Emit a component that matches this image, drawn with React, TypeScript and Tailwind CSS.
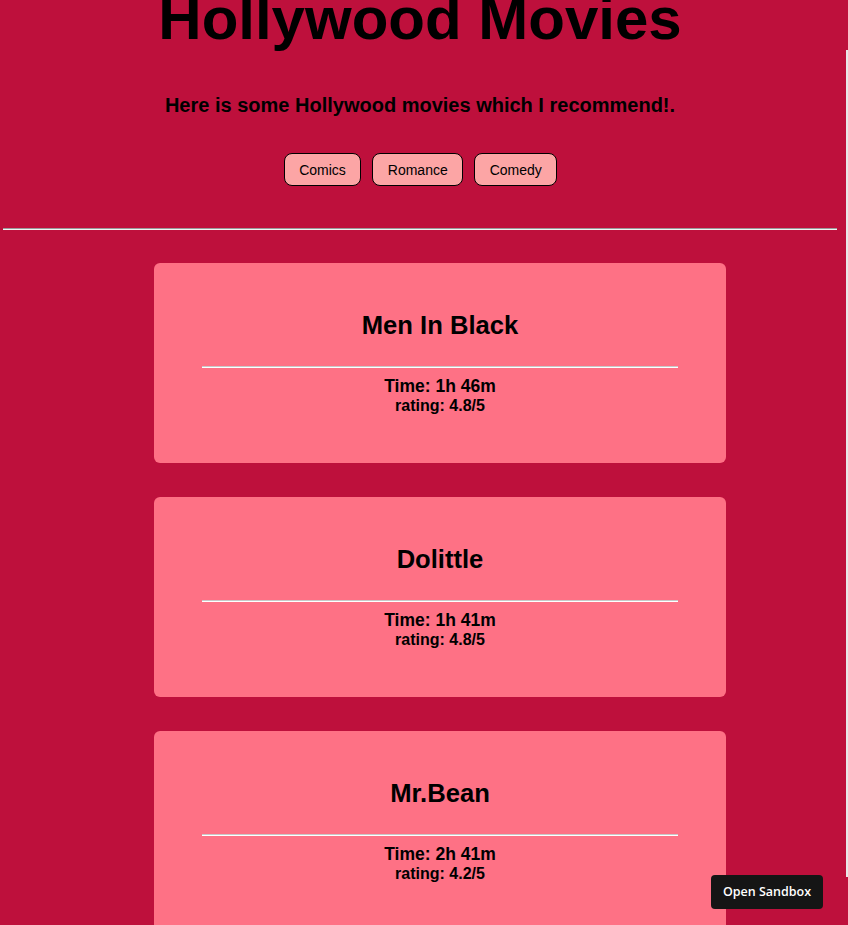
import React from "react";

const movies = [
  { name: "Men In Black", time: "1h 46m", rating: "4.8/5" },
  { name: "Dolittle", time: "1h 41m", rating: "4.8/5" },
  { name: "Mr.Bean", time: "2h 41m", rating: "4.2/5" },
];

export default function App() {
  return (
    <div
      className="relative h-[925px] w-[848px] overflow-hidden bg-[#be103c] text-black"
      style={{ fontFamily: '"Liberation Sans", Arial, sans-serif' }}
    >
      <div className="-mt-[11px] flex flex-col items-center pr-[8px]">
        <h1 className="text-[60px] leading-[60px] font-bold">Hollywood Movies</h1>
        <p className="mt-[45px] text-[20px] leading-[23px] font-bold">
          Here is some Hollywood movies which I recommend!.
        </p>
        <div className="mt-[36px] flex gap-[11px] pl-[1px]">
          {["Comics", "Romance", "Comedy"].map((g) => (
            <button
              key={g}
              className="h-[33px] rounded-[8px] border border-black bg-[#fca5a5] px-[14.5px] text-[14px] leading-[16px] text-black"
            >
              {g}
            </button>
          ))}
        </div>
      </div>
      <div className="mt-[42px] ml-[3px] w-[834px] border-t border-b border-t-[#9a9a9a] border-b-[#f2f2f2]" />
      <div className="mt-[33px] flex flex-col items-center gap-[34px] pl-[32px]">
        {movies.map((m) => (
          <div
            key={m.name}
            className="flex h-[200px] w-[572px] shrink-0 flex-col items-center rounded-[6px] bg-[#fe7185] pt-[48px]"
          >
            <h2 className="text-[25.6px] leading-[29px] font-bold">{m.name}</h2>
            <div className="mt-[26px] w-[476px] border-t border-b border-t-[#c8c8c8] border-b-[#ffffff]" />
            <div className="mt-[8px] text-[17.5px] leading-[20px] font-bold">Time: {m.time}</div>
            <div className="mt-[1px] text-[16px] leading-[18px] font-bold">rating: {m.rating}</div>
          </div>
        ))}
      </div>
      <div className="absolute top-[50px] right-0 h-[827px] w-[2px] bg-[#e8e8e8]" />
      <button
        className="absolute top-[875px] left-[711px] flex h-[34px] w-[112px] items-center justify-center rounded-[4px] bg-[#151515] text-[12.5px] font-semibold text-white"
        style={{ fontFamily: '"Open Sans", "Noto Sans", sans-serif' }}
      >
        Open Sandbox
      </button>
    </div>
  );
}
